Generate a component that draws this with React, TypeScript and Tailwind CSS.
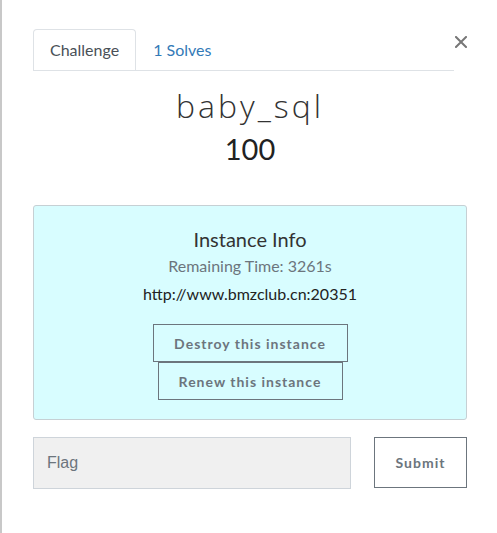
const CloseIcon = () => (
  <svg width="12" height="12" viewBox="0 0 12 12" className="block">
    <path d="M1 1 L11 11 M11 1 L1 11" stroke="#777" strokeWidth="2" strokeLinecap="square" />
  </svg>
);

const App = () => (
  <div className="w-[497px] h-[533px] bg-white border-l-2 border-[#c8c8c8] font-['Lato',sans-serif] text-[#212529]">
    <div className="pl-[31px] pr-[30px] pt-[29px]">
      <div className="flex items-start">
        <div className="flex flex-1 border-b border-[#dee2e6]">
          <div className="h-[41px] px-[16px] flex items-center border border-b-0 border-[#dee2e6] rounded-t-[4px] bg-white text-[16px] text-[#495057] -mb-px">
            Challenge
          </div>
          <div className="h-[41px] px-[17px] flex items-center text-[16px] text-[#337ab7]">1 Solves</div>
        </div>
        <button className="mt-[7px] ml-px">
          <CloseIcon />
        </button>
      </div>

      <div className="text-center pt-[15px]">
        <div className="text-[32px] leading-[40px] font-light tracking-[3px] text-[#333] font-['Open_Sans',sans-serif]">baby_sql</div>
        <div className="text-[29px] leading-[38px] mt-[4px] text-[#222]">100</div>
      </div>

      <div className="mt-[37px] h-[215px] bg-[#d8fdff] border border-[#c6d0d4] rounded-[3px] flex flex-col items-center pt-[21px]">
        <div className="text-[20px] leading-[24px] text-[#333]">Instance Info</div>
        <div className="text-[16px] leading-[20px] mt-[5px] text-[#6c757d]">Remaining Time: 3261s</div>
        <div className="text-[16px] leading-[20px] mt-[8px] text-[#222]">http://www.bmzclub.cn:20351</div>
        <button className="mt-[20px] w-[195px] h-[38px] border border-[#6c757d] text-[14px] font-bold tracking-[1px] text-[#6c757d]">
          Destroy this instance
        </button>
        <button className="w-[185px] h-[38px] border border-[#6c757d] text-[14px] font-bold tracking-[1px] text-[#6c757d]">
          Renew this instance
        </button>
      </div>

      <div className="flex mt-[17px] items-start">
        <input
          placeholder="Flag"
          className="w-[318px] h-[52px] bg-[#f0f0f0] border border-[#ced4da] px-[13px] text-[16px] font-['Liberation_Sans',sans-serif] placeholder:text-[#6c757d] outline-none"
        />
        <div className="flex-1" />
        <button className="w-[93px] h-[51px] border border-[#6c757d] text-[14px] font-bold tracking-[1px] text-[#6c757d]">
          Submit
        </button>
      </div>
    </div>
  </div>
);

export default App;
